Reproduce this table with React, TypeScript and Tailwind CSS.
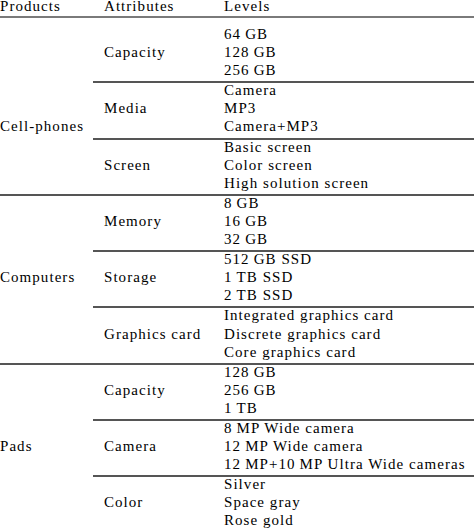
const sections = [
  {
    product: 'Cell-phones',
    labelPad: 'pt-[35px]',
    groups: [
      { attr: 'Capacity', levels: ['64\u2009GB', '128\u2009GB', '256\u2009GB'] },
      { attr: 'Media', levels: ['Camera', 'MP3', 'Camera+MP3'] },
      { attr: 'Screen', levels: ['Basic screen', 'Color screen', 'High solution screen'] },
    ],
  },
  {
    product: 'Computers',
    labelPad: '',
    groups: [
      { attr: 'Memory', levels: ['8\u2009GB', '16\u2009GB', '32\u2009GB'] },
      { attr: 'Storage', levels: ['512\u2009GB SSD', '1\u2009TB SSD', '2\u2009TB SSD'] },
      {
        attr: 'Graphics card',
        levels: ['Integrated graphics card', 'Discrete graphics card', 'Core graphics card'],
      },
    ],
  },
  {
    product: 'Pads',
    labelPad: '',
    groups: [
      { attr: 'Capacity', levels: ['128\u2009GB', '256\u2009GB', '1\u2009TB'] },
      {
        attr: 'Camera',
        levels: ['8\u2009MP Wide camera', '12\u2009MP Wide camera', '12\u2009MP+10\u2009MP Ultra Wide cameras'],
      },
      { attr: 'Color', levels: ['Silver', 'Space gray', 'Rose gold'] },
    ],
  },
]

export default function App() {
  return (
    <div className="w-[474px] h-[530px] overflow-hidden bg-white text-black font-['Liberation_Serif',serif] text-[15px] tracking-[1.05px] whitespace-nowrap">
      {/* Header */}
      <div className="flex h-[16px] leading-[12.6px]">
        <div className="w-[93px]">Products</div>
        <div className="w-[131px] pl-[11px]">Attributes</div>
        <div>Levels</div>
      </div>
      <div className="h-[2px] bg-[#7a7a7a]" />
      <div className="h-[9px]" />

      {sections.map((s, si) => (
        <div key={s.product}>
          {si > 0 && <div className="h-[2px] bg-[#555]" />}
          <div className="flex">
            <div className={`w-[93px] flex items-center pb-[3.9px] leading-[14.2px] ${s.labelPad}`}>
              {s.product}
            </div>
            <div className="flex-1 flex flex-col">
              {s.groups.map((g, gi) => (
                <div key={g.attr + gi}>
                  {gi > 0 && <div className="h-[2px] bg-[#555]" />}
                  <div className="flex pb-[3.9px] leading-[14.2px]">
                    <div className="w-[131px] pl-[11px] flex items-center">{g.attr}</div>
                    <div className="flex flex-col gap-[3.9px]">
                      {g.levels.map((l) => (
                        <div key={l}>{l}</div>
                      ))}
                    </div>
                  </div>
                </div>
              ))}
            </div>
          </div>
        </div>
      ))}
    </div>
  )
}
